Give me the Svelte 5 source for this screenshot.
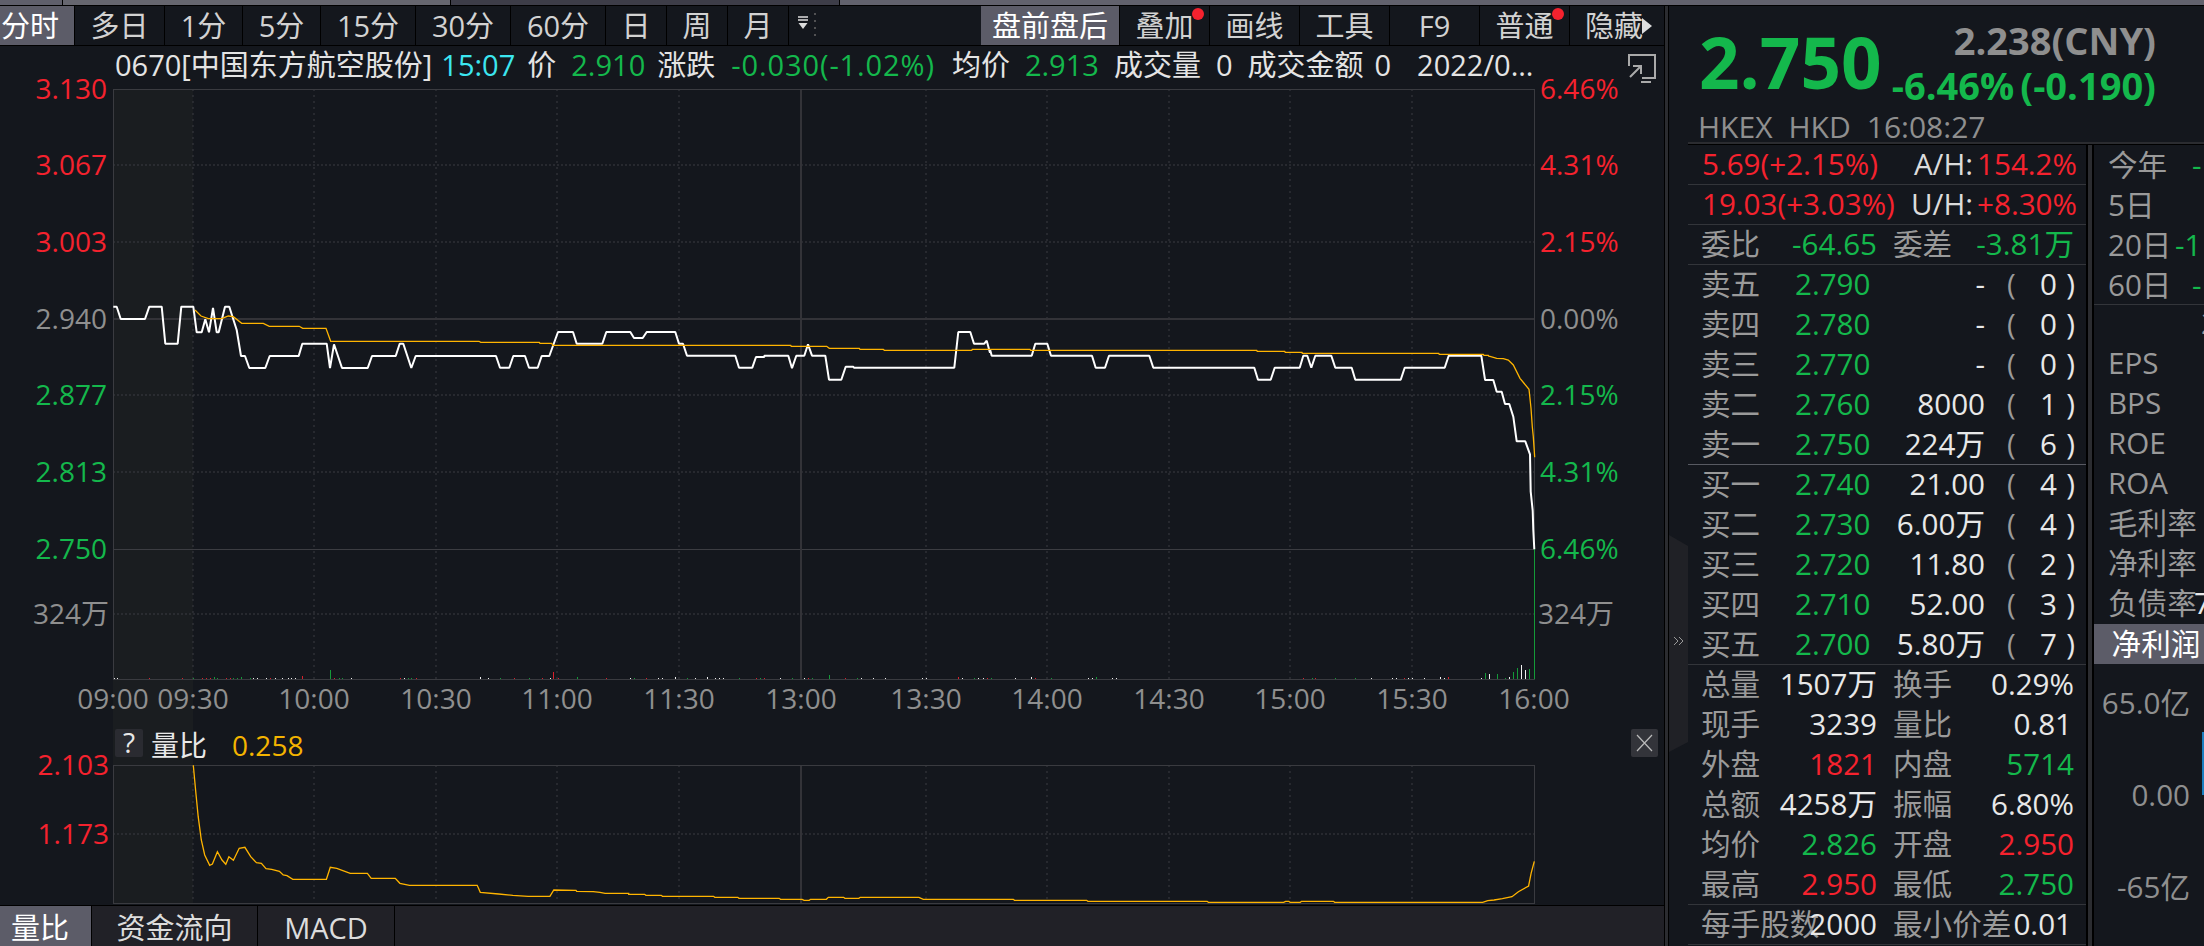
<script>
  const pts = (x0, y0, fx, fy, a) => {
    const out = [];
    for (let i = 0; i < a.length; i += 2) out.push(`${(x0 + a[i] / fx).toFixed(1)},${(y0 + a[i + 1] / fy).toFixed(1)}`);
    return out.join(' ');
  };
  const white = [
    pts(90, 280, 3, 3, [70,80,80,80,92,117,165,117,178,80,215,80,226,191,263,191,274,80,310,80,320,157,335,157,346,118,357,157,369,84,380,157,386,157,405,80,418,80,440,150,453,228,465,228,478,264,526,264,539,228,626,228,637,191,710,191,720,264,732,193,756,264,833,264,846,228,917,228,929,191,940,191,964,264,977,228,1200,228]),
    pts(490, 310, 3, 3, [0,138,18,138,30,173,58,173,70,138,105,138,117,173,143,173,155,138,178,138,204,66,249,66,260,101,337,101,349,66,421,66,432,84,458,84,470,66,556,66,567,101,579,101,591,137,736,137,747,173,787,173,798,141,823,141,823,137,895,137,906,175,919,137,943,137,954,103,966,137,1006,137,1017,209,1054,209,1067,170,1090,170,1092,173,1393,173,1405,66,1441,66,1452,101,1483,101,1490,92,1500,128]),
    pts(990, 310, 3, 3, [0,118,5,137,125,137,136,101,172,101,183,137,306,137,317,173,345,173,357,137,478,137,490,173,793,173,804,209,842,209,854,173,929,173,940,137,952,137,964,173,976,137,1024,137,1036,173,1085,173,1096,209,1232,209,1244,173,1364,173,1376,137,1474,137,1485,209]),
    pts(1300, 300, 3, 3, [555,240,580,240,590,275,605,275,615,312,628,312,640,350,650,424,676,424,690,463,692,575,698,632,700,690,703,748])
  ].join(' ');
  const avg = [
    pts(90, 280, 3, 3, [315,90,333,108,355,116,395,116,415,108,430,110,455,130,520,130,538,139,628,139,638,145,708,145,722,184,1167,184,1172,187,1200,187]),
    pts(490, 310, 3, 3, [0,97,148,97,150,100,185,100,188,106,902,106,904,109,1010,109,1018,115,1108,115,1110,118,1180,118,1183,121,1445,121,1447,118,1500,118]),
    pts(990, 310, 3, 3, [0,118,120,118,122,121,800,121,802,124,884,124,886,127,936,127,937,130,1346,130,1348,133,1480,133,1482,136,1495,136,1497,139]),
    pts(1300, 300, 3, 3, [570,169,590,175,610,176,625,180,640,195,660,235,687,268,693,325,697,380,700,410,704,472])
  ].join(' ');
  const ratio = [
    pts(0, 640, 2.613, 3, [505,376,512,460,518,530,526,600,535,645,548,676,555,672,568,635,580,660,590,673,598,650,610,661,625,625,640,622,655,650,670,668,683,670,695,686,710,688,730,694,740,705,750,707,765,718,853,718,863,682,880,685,915,700,960,700,970,715,1033,715,1045,730,1070,736,1247,736,1255,757,1303,762,1340,766,1380,769,1437,769,1447,750,1505,751,1507,754,1550,755]),
    pts(600, 740, 1.568, 3, [0,457,8,460,45,460,45,463,70,463,72,466,96,466,98,469,178,469,180,472,216,472,218,475,281,475,283,478,317,478,320,481,328,481,330,478,355,478,358,472,382,472,384,475,406,475,408,472,500,472,507,478,648,478,650,481,763,481,765,484,952,484,954,487,1072,487,1075,484,1080,484,1082,487,1098,487,1100,484,1150,484,1152,487,1384,487,1392,482,1402,480,1415,476,1430,470,1440,455,1456,438,1460,400,1465,364])
  ].join(' ');

  const R = '#d8202c', G = '#149a38', W = '#f0f0f0';
  const bars = [];
  const addBars = (f, list) => { for (const [x, c, h] of list) bars.push({ x: Math.round(f(x)), c, h }); };
  addBars(x => x / 2.613, [[297,W,1],[307,W,1],[390,R,1],[475,R,1],[505,G,1],[527,R,1],[537,R,1],[548,R,1],[558,G,2],[568,G,1],[590,R,1],[600,R,1],[610,G,1],[620,G,1],[630,G,2],[652,G,1],[662,W,1],[672,W,1],[695,W,1],[705,R,1],[718,W,1],[738,W,1],[752,W,1],[760,W,1],[770,W,1],[790,R,3],[862,G,9],[874,R,1],[885,G,1],[894,G,1],[918,W,1],[1045,R,1],[1055,W,1],[1065,G,1],[1075,G,1],[1086,R,1],[1255,W,2],[1276,W,1],[1307,G,1],[1342,R,1],[1383,G,1],[1415,R,1],[1436,W,1],[1446,R,7],[1457,R,1],[1509,G,2]]);
  addBars(x => 600 + x / 3, [[19,R,1],[91,W,1],[103,G,1],[139,R,1],[175,W,1],[187,W,1],[226,W,2],[262,G,1],[286,W,1],[322,W,2],[346,W,1],[358,W,1],[370,W,1],[418,G,1],[469,R,1],[481,G,1],[493,R,1],[541,W,1],[577,G,1],[613,W,1],[625,R,1],[637,G,1],[688,G,4],[736,R,1],[772,G,1],[784,W,1],[820,W,1],[856,W,1],[967,W,1],[979,W,1],[1075,R,2],[1087,W,1],[1123,G,1],[1135,W,1],[1150,W,1],[1162,R,1],[1174,G,1],[1246,W,1],[1294,W,2],[1306,R,1],[1354,G,1],[1465,W,1],[1477,W,1],[1489,G,2],[1537,W,1],[1549,W,1]]);
  addBars(x => 1300 + x / 3, [[10,R,1],[35,G,1],[46,R,1],[106,G,1],[166,G,1],[214,W,1],[277,W,1],[288,W,1],[313,R,1],[325,W,1],[337,W,1],[373,W,1],[421,W,2],[433,W,1],[445,R,2],[544,W,1],[556,G,6],[568,W,5],[592,G,5],[616,G,1],[628,W,2],[640,G,7],[652,G,11],[664,W,14],[676,W,9],[688,G,10]]);

  const vgrid = [193, 314, 436, 557, 679, 926, 1047, 1169, 1290, 1412];
  const times = [[113,'09:00'],[193,'09:30'],[314,'10:00'],[436,'10:30'],[557,'11:00'],[679,'11:30'],[801,'13:00'],[926,'13:30'],[1047,'14:00'],[1169,'14:30'],[1290,'15:00'],[1412,'15:30'],[1534,'16:00']];
  const left = [[89,'3.130','up'],[165,'3.067','up'],[242,'3.003','up'],[319,'2.940','flat'],[395,'2.877','down'],[472,'2.813','down'],[549,'2.750','down']];
  const right = [[89,'6.46%','up'],[165,'4.31%','up'],[242,'2.15%','up'],[319,'0.00%','flat'],[395,'2.15%','down'],[472,'4.31%','down'],[549,'6.46%','down']];

  const tabsA = [['分时',75,true],['多日',90],['1分',78],['5分',78],['15分',95],['30分',95],['60分',95],['日',61],['周',61],['月',61]];
  const tabsB = [['盘前盘后',139,true],['叠加',90,false,true],['画线',90],['工具',90],['F9',90],['普通',90,false,true]];

  const asks = [['卖五','2.790','-','0'],['卖四','2.780','-','0'],['卖三','2.770','-','0'],['卖二','2.760','8000','1'],['卖一','2.750','224万','6']];
  const bids = [['买一','2.740','21.00','4'],['买二','2.730','6.00万','4'],['买三','2.720','11.80','2'],['买四','2.710','52.00','3'],['买五','2.700','5.80万','7']];
  const stats = [
    ['总量','1507万','','换手','0.29%',''],
    ['现手','3239','','量比','0.81','in'],
    ['外盘','1821','up','内盘','5714','down'],
    ['总额','4258万','','振幅','6.80%',''],
    ['均价','2.826','down','开盘','2.950','up'],
    ['最高','2.950','up','最低','2.750','down']
  ];
  const side = [['今年','-','down'],['5日','',''],['20日','-1','down n'],['60日','-','down'],['','2','grey'],['EPS','',''],['BPS','',''],['ROE','',''],['ROA','',''],['毛利率','',''],['净利率','',''],['负债率','7','bright t']];
</script>

<div class="page">
  <div class="strip">
    <span class="s1"></span><span class="s2"></span><span class="s3"></span><span class="s4"></span>
  </div>
  <div class="main">
    <section class="chartcol">
      <nav class="toolbar">
        {#each tabsA as t, i}
          <button class="tab" class:active={t[2]} class:first={i === 0} style="width:{t[1]}px">{t[0]}</button>
        {/each}
        <div class="menu">
          <svg width="26" height="39" viewBox="0 0 26 39"><path d="M9 11h10M9 14h10" stroke="#ddd" stroke-width="1.5"/><path d="M9.500 17h9l-4.500 6z" fill="#ddd"/><path d="M26 7v26" stroke="#666" stroke-width="1.500" stroke-dasharray="2 5"/></svg>
        </div>
        <div class="spacer"></div>
        {#each tabsB as t}
          <button class="tab" class:active={t[2]} style="width:{t[1]}px">{t[0]}{#if t[3]}<i class="dot"></i>{/if}</button>
        {/each}
        <button class="tab last">隐藏<i class="arrow"></i></button>
      </nav>
      <div class="info">
        <span class="tight">0670[中国东方航空股份]</span>
        <span class="cyan">15:07</span>
        <span class="pull">价</span>
        <span class="down">2.910</span>
        <span class="pull">涨跌</span>
        <span class="down wide">-0.030(-1.02%)</span>
        <span class="push">均价</span>
        <span class="down">2.913</span>
        <span>成交量</span>
        <span>0</span>
        <span>成交金额</span>
        <span class="pull4">0</span>
        <span class="date">2022/0...</span>
        <svg class="expand" width="30" height="30" viewBox="0 0 30 30" fill="none" stroke="#aaa" stroke-width="2">
          <path d="M2 13V2h26v23H15"/><path d="M3 24l10-10M6 13h8v8" stroke-width="2"/><path d="M14 29h10"/>
        </svg>
      </div>
      <svg class="plot" width="1664" height="821" viewBox="0 84 1664 821">
        <rect x="113" y="89" width="80" height="814" fill="#1a1d20"/>
        {#each vgrid as x}
          <line x1={x} x2={x} y1="89" y2="679" class="dots"/>
          <line x1={x} x2={x} y1="765" y2="903" class="dots"/>
        {/each}
        {#each [165,242,395,472,614] as y}
          <line x1="113" x2="1534" y1={y} y2={y} class="dotsh"/>
        {/each}
        <line x1="113" x2="1534" y1="834" y2="834" class="dotsh"/>
        <line x1="113" x2="1534" y1="549.500" y2="549.500" class="solid"/>
        <line x1="113" x2="1534" y1="319" y2="319" class="mid"/>
        <line x1="801" x2="801" y1="89" y2="679" class="mid"/>
        <line x1="801" x2="801" y1="765" y2="903" class="mid"/>
        <rect x="113.500" y="89.500" width="1421" height="590" class="frame"/>
        <rect x="113.500" y="765.500" width="1421" height="138" class="frame"/>

        {#each bars as b}
          <rect x={b.x} y={679 - b.h} width="1" height={b.h} fill={b.c}/>
        {/each}
        <rect x="1534" y="549" width="1" height="130" fill="#149a38"/>
        <polyline points={white} class="price"/>
        <polyline points={avg} class="avg"/>
        <polyline points={ratio} class="avg"/>

        {#each left as [y, t, c]}
          <text x="107" y={y + 10} text-anchor="end" class="ax {c}">{t}</text>
        {/each}
        {#each right as [y, t, c]}
          <text x="1540" y={y + 10} class="ax {c}">{t}</text>
        {/each}
        <text x="109" y="624" text-anchor="end" class="ax flat">324万</text>
        <text x="1538" y="624" class="ax flat">324万</text>
        {#each times as [x, t]}
          <text x={x} y="709" text-anchor="middle" class="ax flat">{t}</text>
        {/each}
        <text x="109" y="775" text-anchor="end" class="ax up">2.103</text>
        <text x="109" y="844" text-anchor="end" class="ax up">1.173</text>

        <rect x="115" y="729" width="28" height="28" rx="2" fill="#2a2b31"/>
        <text x="129" y="753" text-anchor="middle" class="ax bright">?</text>
        <text x="151" y="756" class="ax bright">量比</text>
        <text x="232" y="756" class="ax gold">0.258</text>
        <rect x="1631" y="729" width="27" height="28" rx="2" fill="#33343a"/>
        <path d="M1637 735l15 16M1652 735l-15 16" stroke="#bbb" stroke-width="1.200"/>
      </svg>
      <div class="bottom">
        <button class="btab active w1">量比</button>
        <button class="btab w2">资金流向</button>
        <button class="btab w3">MACD</button>
      </div>
    </section>

    <div class="divider"></div>

    <aside class="panel">
      <header class="head">
        <div class="quote">
          <div class="big">2.750</div>
          <div class="sub">
            <div class="cny">2.238(CNY)</div>
            <div class="chg">-6.46%<span class="chg2">(-0.190)</span></div>
          </div>
        </div>
        <div class="market"><span>HKEX</span><span>HKD</span><span>16:08:27</span></div>
      </header>
      <div class="headline"></div>
      <div class="body">
        <svg class="gutter" width="19" height="801" viewBox="0 145 19 801">
          <polygon points="0,535 19,546 19,742 0,752" fill="#202126"/>
          <path d="M5 637l4 4-4 4M10 637l4 4-4 4" fill="none" stroke="#999" stroke-width="1"/>
        </svg>
        <div class="book">
          <div class="row pair line"><span class="up">5.69(+2.15%)</span><span class="ah"><b>A/H:</b><span class="up">154.2%</span></span></div>
          <div class="row pair p2 line"><span class="up">19.03(+3.03%)</span><span class="ah"><b>U/H:</b><span class="up">+8.30%</span></span></div>
          <div class="row stat line">
            <span class="lab">委比</span><span class="val down">-64.65</span><span class="lab l2">委差</span><span class="val down">-3.81万</span>
          </div>
          {#each asks as a, i}
            <div class="row lvl" class:strong={i === 4}>
              <span class="lab">{a[0]}</span><span class="down">{a[1]}</span><span class="vol">{a[2]}</span><span class="par">(</span><span class="vol">{a[3]}</span><span class="vol">)</span>
            </div>
          {/each}
          {#each bids as a, i}
            <div class="row lvl" class:line={i === 4}>
              <span class="lab">{a[0]}</span><span class="down">{a[1]}</span><span class="vol">{a[2]}</span><span class="par">(</span><span class="vol">{a[3]}</span><span class="vol">)</span>
            </div>
          {/each}
          {#each stats as s, i}
            <div class="row stat" class:line={i === 5}>
              <span class="lab">{s[0]}</span><span class="val {s[2]}">{s[1]}</span><span class="lab l2">{s[3]}</span><span class="val {s[5]}">{s[4]}</span>
            </div>
          {/each}
          <div class="row stat line">
            <span class="lab nw">每手股数</span><span class="val">2000</span><span class="lab l2 nw">最小价差</span><span class="val in">0.01</span>
          </div>
        </div>
        <div class="bookdiv"></div>
        <div class="side">
          {#each side as s, i}
            <div class="srow" class:line={i === 3} class:lo={i >= 4}>
              <span class="slab">{s[0]}</span><span class="sval {s[2]}">{s[1]}</span>
            </div>
          {/each}
          <div class="stab">净利润</div>
          <div class="sch">
            <span>65.0亿</span><span>0.00</span><span>-65亿</span>
            <i class="blue"></i>
          </div>
        </div>
      </div>
    </aside>
  </div>
</div>

<style>
  :global(body) { margin: 0; background: #14171d; overflow: hidden; }
  .page {
    width: 2204px; height: 946px; overflow: hidden; background: #14171d; color: #e4e4e4;
    font-family: "Open Sans", "Noto Sans CJK SC", sans-serif; font-size: 29px;
  }
  .strip { height: 5px; display: flex; gap: 1px; background: #000; border-bottom: 1px solid #000; }
  .s1 { width: 62px; background: #5f5f6b; }
  .s2 { width: 387px; background: #66666f; }
  .s3 { width: 388px; background: #3d3d48; }
  .s4 { flex: 1; background: #62626d; }
  .main { display: flex; height: 940px; }
  .chartcol { width: 1664px; display: flex; flex-direction: column; }
  .toolbar { height: 39px; display: flex; border-bottom: 1px solid #000; }
  .tab {
    position: relative; box-sizing: border-box; height: 39px; padding: 0; border: 0; border-right: 1px solid #000;
    background: transparent; color: #d2d2d2; font: inherit; line-height: 39px; white-space: nowrap;
  }
  .tab.active { background: #5c5c68; color: #fff; }
  .tab.first { text-align: left; padding-left: 1px; }
  .tab.last { width: 94px; border-right: 0; text-align: left; padding-left: 15px; }
  .menu { width: 26px; height: 39px; }
  .menu svg { display: block; overflow: visible; }
  .spacer { flex: 1; }
  .dot { position: absolute; right: 5px; top: 2px; width: 12px; height: 12px; border-radius: 50%; background: #f5222e; }
  .arrow { position: absolute; right: 12px; top: 12px; border-left: 10px solid #ddd; border-top: 8px solid transparent; border-bottom: 8px solid transparent; }
  .info { height: 38px; display: flex; gap: 15px; align-items: center; padding-left: 115px; position: relative; white-space: nowrap; line-height: 38px; }
  .tight { margin-right: -6px; }
  .pull { margin-left: -3px; }
  .pull4 { margin-left: -4px; }
  .push { margin-left: 2px; }
  .wide { margin-left: 1px; letter-spacing: 0.9px; }
  .cyan { color: #3ce6f0; }
  .date { margin-left: 11px; }
  .expand { position: absolute; left: 1627px; top: 7px; }
  .plot { display: block; overflow: visible; }
  .dots { stroke: #3a3c42; stroke-width: 1; stroke-dasharray: 2 4; }
  .dotsh { stroke: #3a3c42; stroke-width: 1; stroke-dasharray: 2 2; }
  .solid { stroke: #3c3d42; stroke-width: 1; }
  .mid { stroke: #333338; stroke-width: 2; }
  .frame { fill: none; stroke: #3a3b40; stroke-width: 1; }
  .price { fill: none; stroke: #fff; stroke-width: 2; stroke-linejoin: bevel; }
  .avg { fill: none; stroke: #ffb400; stroke-width: 1.300; }
  .ax { font-size: 28px; }
  text.up { fill: #f5222e; }
  text.down { fill: #14b84c; }
  text.flat { fill: #8f8f8f; }
  text.bright { fill: #e8e8e8; }
  text.gold { fill: #f4b400; }
  .up { color: #f5222e; }
  .down { color: #14b84c; }
  .bottom { height: 40px; display: flex; background: #212127; border-top: 1px solid #000; overflow: hidden; }
  .btab { box-sizing: border-box; height: 40px; border: 0; border-right: 1px solid #000; padding: 0; background: transparent; color: #dcdcdc; font: inherit; line-height: 44px; }
  .btab.active { background: #5c5c68; color: #fff; padding-right: 11px; }
  .w1 { width: 92px; } .w2 { width: 166px; } .w3 { width: 137px; }
  .divider { width: 5px; background: #2b2c30; border-left: 1px solid #000; border-right: 1px solid #000; box-sizing: border-box; }
  .panel { flex: 1; min-width: 0; display: flex; flex-direction: column; font-size: 29.600px; }
  .head { height: 136px; box-sizing: border-box; padding-left: 30px; }
  .quote { display: flex; height: 100px; }
  .big { font-size: 71px; font-weight: 700; color: #14b84c; line-height: 100px; width: 192px; margin-top: 6px; }
  .sub { width: 265px; display: flex; flex-direction: column; align-items: flex-end; font-weight: 700; font-size: 38px; line-height: 45px; padding-top: 12px; }
  .cny { color: #8f8f8f; }
  .chg { color: #14b84c; }
  .chg2 { margin-left: 6px; }
  .market { display: flex; gap: 16px; color: #8f8f8f; line-height: 40px; margin-top: 1px; margin-left: -1px; font-size: 30px; }
  .headline { height: 3px; margin-left: 19px; background: #2b2c30; border-bottom: 1px solid #000; box-sizing: border-box; }
  .body { flex: 1; display: flex; min-height: 0; }
  .gutter { display: block; flex: none; }
  .book { width: 398px; flex: none; }
  .row { height: 40px; box-sizing: border-box; padding-left: 13px; line-height: 38px; white-space: nowrap; }
  .row.line { border-bottom: 1px solid #33353a; }
  .row.strong { border-bottom: 1px solid #585a62; }
  .pair { display: flex; justify-content: space-between; padding-right: 9px; padding-left: 14px; }
  .p2 { padding-left: 14px; }
  .ah b { font-weight: 400; color: #dcdcdc; margin-right: 4px; }
  .lab { color: #9a9a9a; }
  .lvl { display: grid; grid-template-columns: 94px 91px 99px 34px 38px 18px; }
  .vol { text-align: right; color: #e8e8e8; }
  .par { color: #9a9a9a; padding-left: 22px; }
  .stat { display: grid; grid-template-columns: 58px 118px 74px 123px; }
  .l2 { margin-left: 16px; }
  .val { text-align: right; color: #e8e8e8; }
  .val.up { color: #f5222e; }
  .val.down { color: #14b84c; }
  .val.in { padding-right: 2px; }
  .nw { white-space: nowrap; }
  .bookdiv { width: 8px; flex: none; background: #2b2c30; border-left: 2px solid #000; border-right: 2px solid #000; box-sizing: border-box; }
  .side { flex: 1; min-width: 0; overflow: hidden; }
  .srow { height: 40px; box-sizing: border-box; padding-left: 14px; display: grid; grid-template-columns: 84px 30px; line-height: 39px; white-space: nowrap; color: #9a9a9a; }
  .srow.line { border-bottom: 1px solid #33353a; }
  .srow.lo { line-height: 35px; }
  .sval.n { margin-left: -17px; }
  .sval.grey { margin-left: 9px; }
  .sval.t { margin-left: 2px; }
  .sval.bright { color: #e8e8e8; }
  .stab { height: 40px; background: #5c5c68; color: #fff; line-height: 40px; text-align: center; margin-top: -1px; padding-left: 14px; box-sizing: border-box; white-space: nowrap; }
  .sch { position: relative; height: 280px; display: flex; flex-direction: column; padding-right: 14px; align-items: flex-end; color: #8f8f8f; gap: 52px; line-height: 40px; padding-top: 19px; box-sizing: border-box; }
  .blue { position: absolute; right: 0; top: 68px; width: 2px; height: 63px; background: #1a7fc0; }
</style>
